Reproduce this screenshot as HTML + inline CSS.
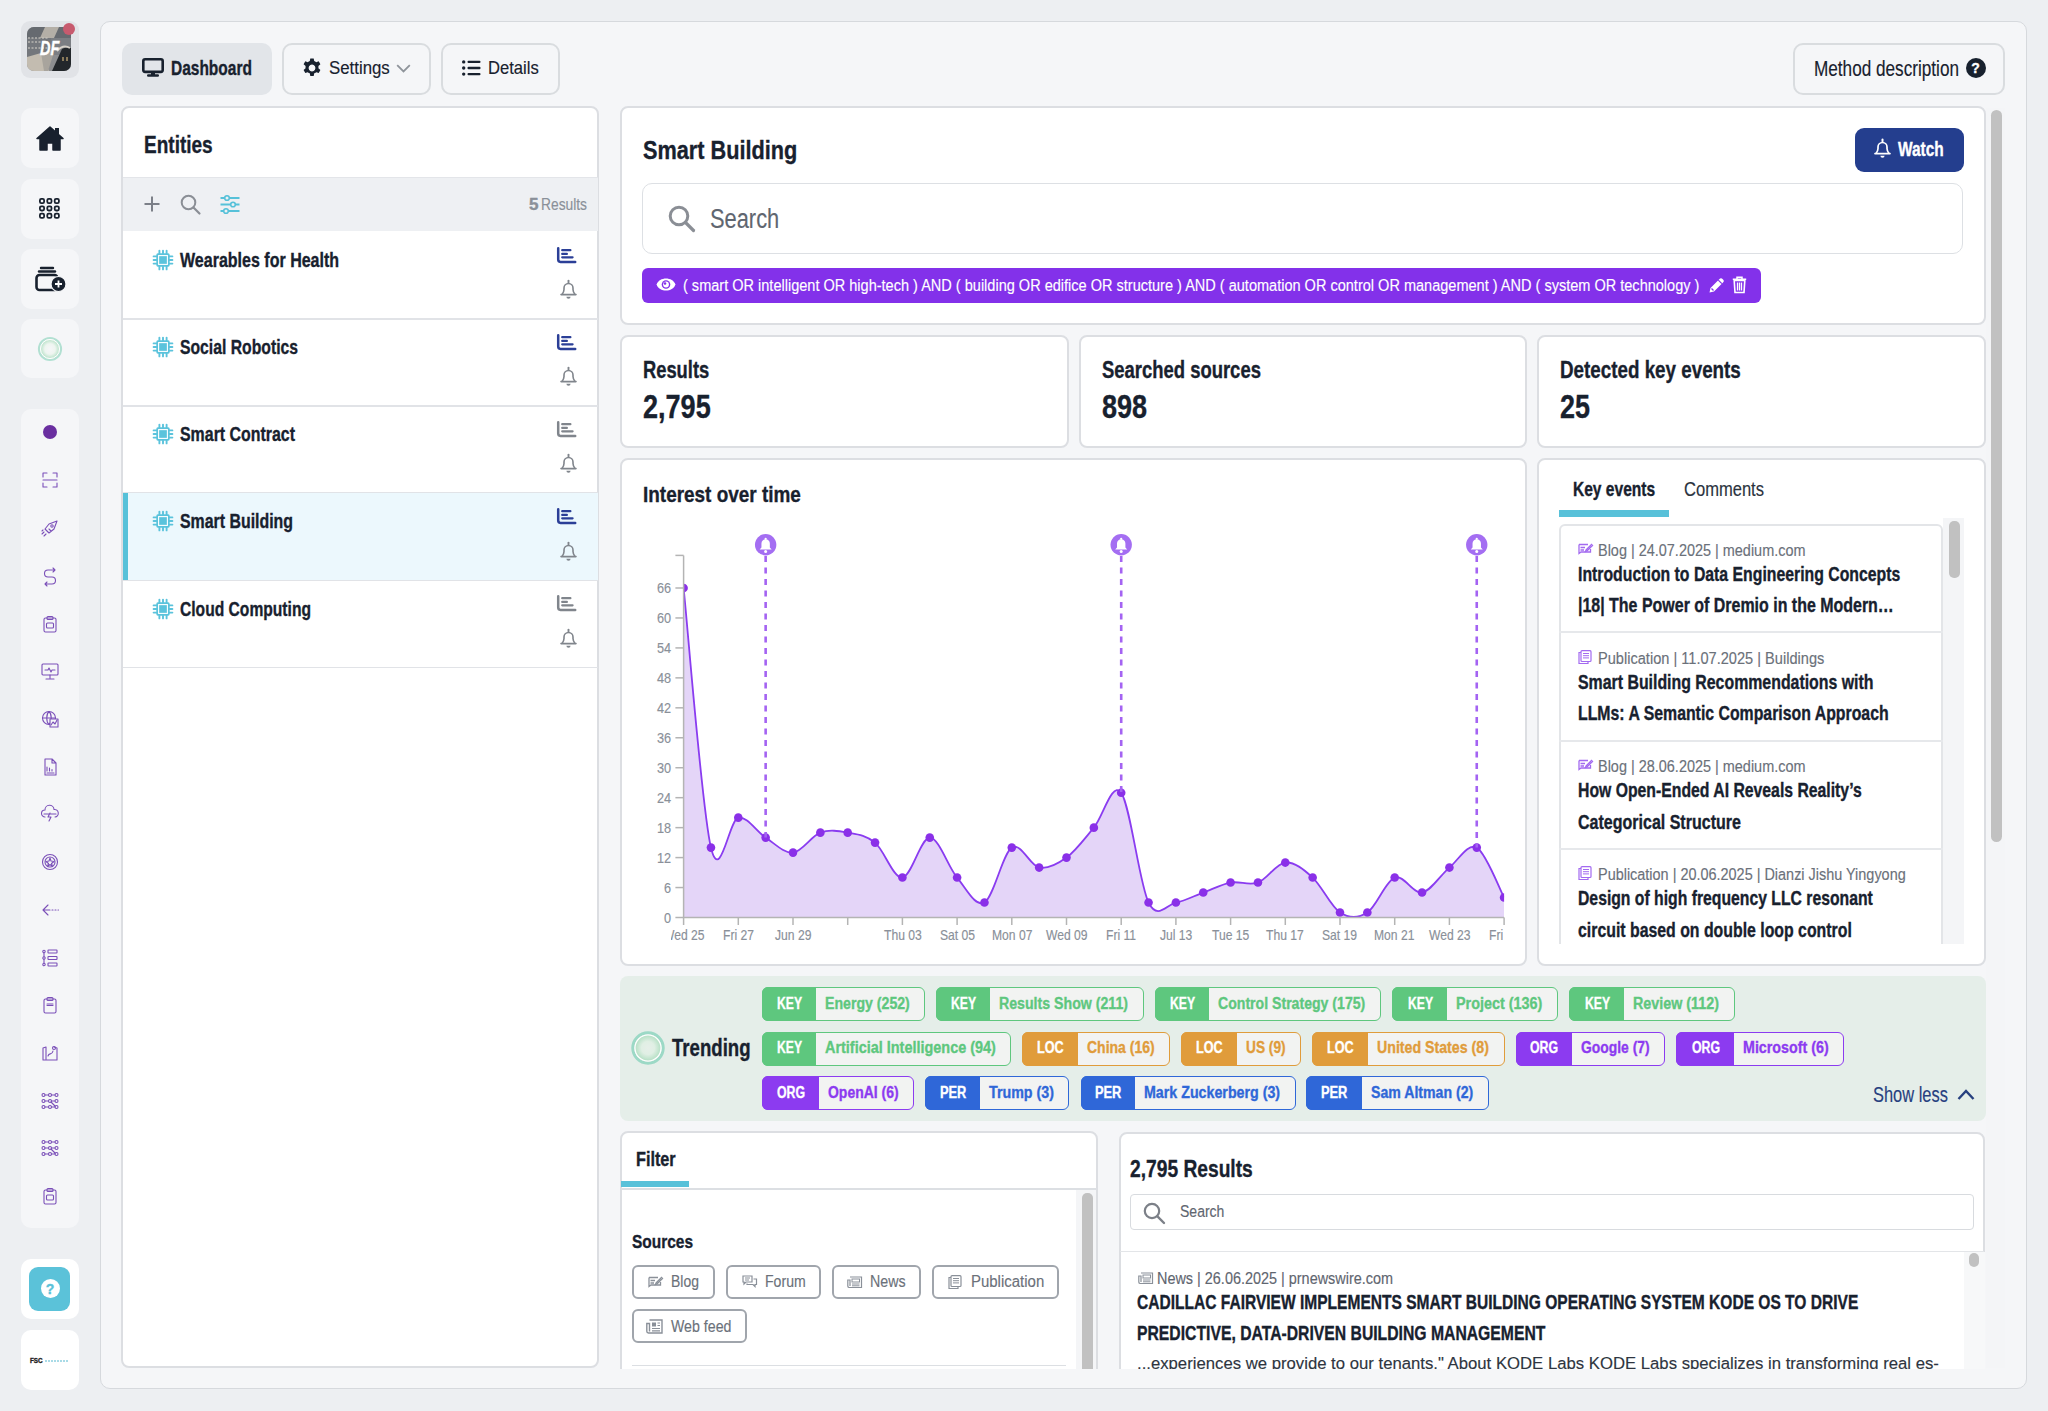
<!DOCTYPE html>
<html><head><meta charset="utf-8"><title>Smart Building Dashboard</title>
<style>
html,body{margin:0;padding:0;}
body{width:2048px;height:1411px;position:relative;overflow:hidden;background:#edeff2;font-family:'Liberation Sans', sans-serif;}
div{box-sizing:border-box;}
.t{position:absolute;white-space:nowrap;line-height:1;transform-origin:0 0;}
svg{overflow:visible;}
</style></head><body>
<div style="position:absolute;left:21px;top:21px;width:58px;height:56.5px;background:#e1e3e7;border-radius:9px;"></div>
<svg style="position:absolute;left:27px;top:27px" width="44" height="44" viewBox="0 0 44 44"><defs><clipPath id="av"><rect width="44" height="44" rx="7"/></clipPath></defs><g clip-path="url(#av)"><rect width="44" height="44" fill="#8d8e90"/><rect width="44" height="11" fill="#666a70"/><path d="M18 0 H32 L27 11 H13 Z" fill="#b4afa7"/><path d="M0 11 H24 V32 H0 Z" fill="#74777c"/><path d="M1 11 H22 M1 15 H22 M1 21 H22" stroke="#c9c6c0" stroke-width="1.4" stroke-dasharray="2,1.5" opacity=".8"/><path d="M0 30 L14 26 L22 44 H0 Z" fill="#c3bcb0"/><path d="M14 26 L28 22 L21 44 H17 Z" fill="#a8a49d"/><path d="M24 11 H44 V28 H24 Z" fill="#7b7e83"/><path d="M25 44 L35 22 Q40 19 44 21 V44 Z" fill="#23272b"/><path d="M30 24 Q36 17 43 21" fill="none" stroke="#d6d1c9" stroke-width="2"/><rect x="35" y="30" width="2" height="4" fill="#8a7a5a"/><rect x="39" y="30" width="2" height="4" fill="#8a7a5a"/></g></svg>
<span class="t" style="left:39.70px;top:37.70px;font-size:20.20px;font-weight:700;color:#ffffff;transform:scaleX(0.7169);-webkit-text-stroke:0.35px #ffffff;font-style:italic;">DF</span>
<div style="position:absolute;left:62.9px;top:23.2px;width:12px;height:12px;background:#c75a6e;border-radius:50%;"></div>
<div style="position:absolute;left:21px;top:108px;width:58px;height:60px;background:#f5f6f8;border-radius:10px;"></div>
<div style="position:absolute;left:21px;top:179px;width:58px;height:60px;background:#f5f6f8;border-radius:10px;"></div>
<div style="position:absolute;left:21px;top:249px;width:58px;height:60px;background:#f5f6f8;border-radius:10px;"></div>
<div style="position:absolute;left:21px;top:319px;width:58px;height:59px;background:#f5f6f8;border-radius:10px;"></div>
<svg style="position:absolute;left:36px;top:126px;" width="28" height="25" viewBox="0 0 28 25"><path d="M14 1 L27 12.5 L24 12.5 L24 24 L17 24 L17 17 L11 17 L11 24 L4 24 L4 12.5 L1 12.5 Z" fill="#18212e" stroke="#18212e" stroke-width="1.5" stroke-linejoin="round"/><rect x="19" y="2" width="4" height="7" fill="#18212e"/></svg>
<svg style="position:absolute;left:39.3px;top:197.8px;" width="22" height="22" viewBox="0 0 22 22"><rect x="0.90" y="0.90" width="4.2" height="4.2" rx="1.4" fill="none" stroke="#18212e" stroke-width="1.8"/><rect x="0.90" y="8.30" width="4.2" height="4.2" rx="1.4" fill="none" stroke="#18212e" stroke-width="1.8"/><rect x="0.90" y="15.70" width="4.2" height="4.2" rx="1.4" fill="none" stroke="#18212e" stroke-width="1.8"/><rect x="8.30" y="0.90" width="4.2" height="4.2" rx="1.4" fill="none" stroke="#18212e" stroke-width="1.8"/><rect x="8.30" y="8.30" width="4.2" height="4.2" rx="1.4" fill="none" stroke="#18212e" stroke-width="1.8"/><rect x="8.30" y="15.70" width="4.2" height="4.2" rx="1.4" fill="none" stroke="#18212e" stroke-width="1.8"/><rect x="15.70" y="0.90" width="4.2" height="4.2" rx="1.4" fill="none" stroke="#18212e" stroke-width="1.8"/><rect x="15.70" y="8.30" width="4.2" height="4.2" rx="1.4" fill="none" stroke="#18212e" stroke-width="1.8"/><rect x="15.70" y="15.70" width="4.2" height="4.2" rx="1.4" fill="none" stroke="#18212e" stroke-width="1.8"/></svg>
<svg style="position:absolute;left:35px;top:266px;" width="32" height="26" viewBox="0 0 32 26"><rect x="1.5" y="9" width="21" height="15" rx="3" fill="none" stroke="#18212e" stroke-width="2.6"/><path d="M4 5.5 H20" stroke="#18212e" stroke-width="2.4" stroke-linecap="round"/><path d="M6 2 H18" stroke="#18212e" stroke-width="2.4" stroke-linecap="round"/><circle cx="23.5" cy="18" r="7.5" fill="#18212e" stroke="#f5f6f8" stroke-width="1.2"/><path d="M23.5 14.5 V21.5 M20 18 H27" stroke="#fff" stroke-width="1.8"/></svg>
<svg style="position:absolute;left:36px;top:334.5px;" width="28" height="28" viewBox="0 0 28 28"><defs><radialGradient id="sg"><stop offset="0" stop-color="#f5f6f8"/><stop offset="0.55" stop-color="#eef5f0"/><stop offset="1" stop-color="#b9e2c9"/></radialGradient></defs><circle cx="14" cy="14" r="11" fill="none" stroke="#a6dccb" stroke-width="2.2" opacity=".85"/><circle cx="14" cy="14" r="9.5" fill="url(#sg)" stroke="#ffffff" stroke-width="1"/></svg>
<div style="position:absolute;left:21px;top:409px;width:58px;height:819px;background:#f5f6f8;border-radius:10px;"></div>
<div style="position:absolute;left:42.8px;top:424.9px;width:14px;height:14px;background:#6a2fa0;border-radius:50%;"></div>
<svg style="position:absolute;left:41px;top:471px;" width="18" height="18" viewBox="0 0 18 18"><path d="M2 6 V2 H6 M12 2 H16 V6 M16 12 V16 H12 M6 16 H2 V12 M2 9 H16" fill="none" stroke="#7a4fb8" stroke-width="1.1" stroke-linecap="round" stroke-linejoin="round"/></svg>
<svg style="position:absolute;left:41px;top:519px;" width="18" height="18" viewBox="0 0 18 18"><path d="M16 2 L8 5 L4 10 L8 14 L13 10 Z M8 10 L10 12 M3 13 L1 15 M5 15 L3 17 M2 11 L1 12" fill="none" stroke="#7a4fb8" stroke-width="1.1" stroke-linecap="round" stroke-linejoin="round"/><circle cx="11" cy="7" r="1.2" fill="none" stroke="#7a4fb8" stroke-width="1.1" stroke-linecap="round" stroke-linejoin="round"/></svg>
<svg style="position:absolute;left:41px;top:567px;" width="18" height="18" viewBox="0 0 18 18"><path d="M14 3 H7 A3.5 3.5 0 0 0 7 10 H11 A3.5 3.5 0 0 1 11 17 H4 M12 1 L14 3 L12 5 M6 15 L4 17 L6 19" fill="none" stroke="#7a4fb8" stroke-width="1.1" stroke-linecap="round" stroke-linejoin="round"/></svg>
<svg style="position:absolute;left:41px;top:615px;" width="18" height="18" viewBox="0 0 18 18"><rect x="3" y="3" width="12" height="14" rx="1.5" fill="none" stroke="#7a4fb8" stroke-width="1.1" stroke-linecap="round" stroke-linejoin="round"/><rect x="6" y="1.5" width="6" height="3" rx="1" fill="none" stroke="#7a4fb8" stroke-width="1.1" stroke-linecap="round" stroke-linejoin="round"/><rect x="5.5" y="8" width="7" height="5" rx="1" fill="none" stroke="#7a4fb8" stroke-width="1.1" stroke-linecap="round" stroke-linejoin="round"/></svg>
<svg style="position:absolute;left:41px;top:662px;" width="18" height="18" viewBox="0 0 18 18"><rect x="1" y="2" width="16" height="11" rx="1" fill="none" stroke="#7a4fb8" stroke-width="1.1" stroke-linecap="round" stroke-linejoin="round"/><path d="M4 8 H7 L8 6 L10 10 L11 8 H14 M9 13 V16 M5 17 H13" fill="none" stroke="#7a4fb8" stroke-width="1.1" stroke-linecap="round" stroke-linejoin="round"/></svg>
<svg style="position:absolute;left:41px;top:710px;" width="18" height="18" viewBox="0 0 18 18"><circle cx="8" cy="8" r="6.5" fill="none" stroke="#7a4fb8" stroke-width="1.1" stroke-linecap="round" stroke-linejoin="round"/><path d="M1.5 8 H14.5 M8 1.5 C5 4 5 12 8 14.5 M8 1.5 C11 4 11 12 8 14.5" fill="none" stroke="#7a4fb8" stroke-width="1.1" stroke-linecap="round" stroke-linejoin="round"/><rect x="9" y="9" width="8" height="8" fill="#f5f6f8" fill="none" stroke="#7a4fb8" stroke-width="1.1" stroke-linecap="round" stroke-linejoin="round"/><path d="M10 15 L12 12 L14 14 L16 10" fill="none" stroke="#7a4fb8" stroke-width="1.1" stroke-linecap="round" stroke-linejoin="round"/></svg>
<svg style="position:absolute;left:41px;top:758px;" width="18" height="18" viewBox="0 0 18 18"><path d="M4 1 H11 L15 5 V17 H4 Z M11 1 V5 H15 M6 9 V13 M8.5 10 V13 M11 11.5 V13 M6 15 H13" fill="none" stroke="#7a4fb8" stroke-width="1.1" stroke-linecap="round" stroke-linejoin="round"/></svg>
<svg style="position:absolute;left:41px;top:806px;" width="18" height="18" viewBox="0 0 18 18"><path d="M4 11 A3.5 3.5 0 0 1 4 4 A4.5 4.5 0 0 1 13 3.5 A3.5 3.5 0 0 1 14 11 M9 7 L7 11 H10 L8 15 M3 8 H15" fill="none" stroke="#7a4fb8" stroke-width="1.1" stroke-linecap="round" stroke-linejoin="round"/></svg>
<svg style="position:absolute;left:41px;top:853px;" width="18" height="18" viewBox="0 0 18 18"><circle cx="9" cy="9" r="7.5" fill="none" stroke="#7a4fb8" stroke-width="1.1" stroke-linecap="round" stroke-linejoin="round"/><circle cx="9" cy="9" r="5" fill="none" stroke="#7a4fb8" stroke-width="1.1" stroke-linecap="round" stroke-linejoin="round"/><path d="M9 5 L10 8 L13 8.5 L10.5 10.5 L11.5 13.5 L9 11.5 L6.5 13.5 L7.5 10.5 L5 8.5 L8 8 Z" fill="none" stroke="#7a4fb8" stroke-width="1.1" stroke-linecap="round" stroke-linejoin="round"/></svg>
<svg style="position:absolute;left:41px;top:901px;" width="18" height="18" viewBox="0 0 18 18"><path d="M7 4 L2 9 L7 14 M2 9 H9" fill="none" stroke="#7a4fb8" stroke-width="1.1" stroke-linecap="round" stroke-linejoin="round" stroke-width="1.8"/><path d="M11 9 H12 M14 9 H15 M17 9 H17.5" fill="none" stroke="#7a4fb8" stroke-width="1.1" stroke-linecap="round" stroke-linejoin="round"/></svg>
<svg style="position:absolute;left:41px;top:949px;" width="18" height="18" viewBox="0 0 18 18"><circle cx="3" cy="2.5" r="1.2" fill="none" stroke="#7a4fb8" stroke-width="1.1" stroke-linecap="round" stroke-linejoin="round"/><circle cx="3" cy="9" r="1.2" fill="none" stroke="#7a4fb8" stroke-width="1.1" stroke-linecap="round" stroke-linejoin="round"/><circle cx="3" cy="15.5" r="1.2" fill="none" stroke="#7a4fb8" stroke-width="1.1" stroke-linecap="round" stroke-linejoin="round"/><path d="M3 3.7 V7.8 M3 10.2 V14.3" fill="none" stroke="#7a4fb8" stroke-width="1.1" stroke-linecap="round" stroke-linejoin="round"/><rect x="7" y="1" width="9" height="3" rx=".5" fill="none" stroke="#7a4fb8" stroke-width="1.1" stroke-linecap="round" stroke-linejoin="round"/><rect x="7" y="7.5" width="9" height="3" rx=".5" fill="none" stroke="#7a4fb8" stroke-width="1.1" stroke-linecap="round" stroke-linejoin="round"/><rect x="7" y="14" width="9" height="3" rx=".5" fill="none" stroke="#7a4fb8" stroke-width="1.1" stroke-linecap="round" stroke-linejoin="round"/></svg>
<svg style="position:absolute;left:41px;top:996px;" width="18" height="18" viewBox="0 0 18 18"><rect x="3" y="3" width="12" height="14" rx="1.5" fill="none" stroke="#7a4fb8" stroke-width="1.1" stroke-linecap="round" stroke-linejoin="round"/><rect x="6" y="1.5" width="6" height="3" rx="1" fill="none" stroke="#7a4fb8" stroke-width="1.1" stroke-linecap="round" stroke-linejoin="round"/><path d="M6 8 H12 M6 9.5 H12" fill="none" stroke="#7a4fb8" stroke-width="1.1" stroke-linecap="round" stroke-linejoin="round"/></svg>
<svg style="position:absolute;left:41px;top:1044px;" width="18" height="18" viewBox="0 0 18 18"><path d="M2 4 V16 H16 V4 M2 4 L5 3 V15 M13 3 L16 4 M7 12 C8 8 11 12 12 7" fill="none" stroke="#7a4fb8" stroke-width="1.1" stroke-linecap="round" stroke-linejoin="round"/><circle cx="13" cy="4" r="1.5" fill="none" stroke="#7a4fb8" stroke-width="1.1" stroke-linecap="round" stroke-linejoin="round"/></svg>
<svg style="position:absolute;left:41px;top:1092px;" width="18" height="18" viewBox="0 0 18 18"><circle cx="2.5" cy="3" r="1.5" fill="none" stroke="#7a4fb8" stroke-width="1.1" stroke-linecap="round" stroke-linejoin="round"/><circle cx="9" cy="3" r="1.5" fill="none" stroke="#7a4fb8" stroke-width="1.1" stroke-linecap="round" stroke-linejoin="round"/><circle cx="15.5" cy="3" r="1.5" fill="none" stroke="#7a4fb8" stroke-width="1.1" stroke-linecap="round" stroke-linejoin="round"/><circle cx="2.5" cy="9" r="1.5" fill="none" stroke="#7a4fb8" stroke-width="1.1" stroke-linecap="round" stroke-linejoin="round"/><circle cx="9" cy="9" r="1.5" fill="none" stroke="#7a4fb8" stroke-width="1.1" stroke-linecap="round" stroke-linejoin="round"/><circle cx="15.5" cy="9" r="1.5" fill="none" stroke="#7a4fb8" stroke-width="1.1" stroke-linecap="round" stroke-linejoin="round"/><circle cx="2.5" cy="15" r="1.5" fill="none" stroke="#7a4fb8" stroke-width="1.1" stroke-linecap="round" stroke-linejoin="round"/><circle cx="9" cy="15" r="1.5" fill="none" stroke="#7a4fb8" stroke-width="1.1" stroke-linecap="round" stroke-linejoin="round"/><circle cx="15.5" cy="15" r="1.5" fill="none" stroke="#7a4fb8" stroke-width="1.1" stroke-linecap="round" stroke-linejoin="round"/><path d="M4 3 H7.5 M10.5 3 H14 M4 9 H7.5 M10.5 9 H14 M4 15 H7.5 M10.5 15 H14 M10 10 L14 14" fill="none" stroke="#7a4fb8" stroke-width="1.1" stroke-linecap="round" stroke-linejoin="round"/></svg>
<svg style="position:absolute;left:41px;top:1139px;" width="18" height="18" viewBox="0 0 18 18"><circle cx="2.5" cy="3" r="1.5" fill="none" stroke="#7a4fb8" stroke-width="1.1" stroke-linecap="round" stroke-linejoin="round"/><circle cx="9" cy="3" r="1.5" fill="none" stroke="#7a4fb8" stroke-width="1.1" stroke-linecap="round" stroke-linejoin="round"/><circle cx="15.5" cy="3" r="1.5" fill="none" stroke="#7a4fb8" stroke-width="1.1" stroke-linecap="round" stroke-linejoin="round"/><circle cx="2.5" cy="9" r="1.5" fill="none" stroke="#7a4fb8" stroke-width="1.1" stroke-linecap="round" stroke-linejoin="round"/><circle cx="9" cy="9" r="1.5" fill="none" stroke="#7a4fb8" stroke-width="1.1" stroke-linecap="round" stroke-linejoin="round"/><circle cx="15.5" cy="9" r="1.5" fill="none" stroke="#7a4fb8" stroke-width="1.1" stroke-linecap="round" stroke-linejoin="round"/><circle cx="2.5" cy="15" r="1.5" fill="none" stroke="#7a4fb8" stroke-width="1.1" stroke-linecap="round" stroke-linejoin="round"/><circle cx="9" cy="15" r="1.5" fill="none" stroke="#7a4fb8" stroke-width="1.1" stroke-linecap="round" stroke-linejoin="round"/><circle cx="15.5" cy="15" r="1.5" fill="none" stroke="#7a4fb8" stroke-width="1.1" stroke-linecap="round" stroke-linejoin="round"/><path d="M4 3 H7.5 M10.5 3 H14 M4 9 H7.5 M10.5 9 H14 M4 15 H7.5 M10.5 15 H14 M10 10 L14 14" fill="none" stroke="#7a4fb8" stroke-width="1.1" stroke-linecap="round" stroke-linejoin="round"/></svg>
<svg style="position:absolute;left:41px;top:1187px;" width="18" height="18" viewBox="0 0 18 18"><rect x="3" y="3" width="12" height="14" rx="1.5" fill="none" stroke="#7a4fb8" stroke-width="1.1" stroke-linecap="round" stroke-linejoin="round"/><rect x="6" y="1.5" width="6" height="3" rx="1" fill="none" stroke="#7a4fb8" stroke-width="1.1" stroke-linecap="round" stroke-linejoin="round"/><rect x="5.5" y="8" width="7" height="5" rx="1" fill="none" stroke="#7a4fb8" stroke-width="1.1" stroke-linecap="round" stroke-linejoin="round"/></svg>
<div style="position:absolute;left:21px;top:1259px;width:58px;height:60px;background:#ffffff;border-radius:10px;"></div>
<div style="position:absolute;left:29px;top:1267px;width:41px;height:44px;background:#5bc2d9;border-radius:9px;"></div>
<div style="position:absolute;left:40.5px;top:1278.8px;width:19px;height:19px;background:#ffffff;border-radius:50%;"></div>
<span class="t" style="left:45.72px;top:1282.30px;font-size:14.00px;font-weight:700;color:#5bc2d9;transform:scaleX(1.0000);-webkit-text-stroke:0.35px #5bc2d9;">?</span>
<div style="position:absolute;left:21px;top:1330px;width:58px;height:60px;background:#ffffff;border-radius:10px;"></div>
<span class="t" style="left:30.00px;top:1357.00px;font-size:7.00px;font-weight:700;color:#222;transform:scaleX(0.9000);-webkit-text-stroke:0.35px #222;">FSC</span>
<div style="position:absolute;left:45px;top:1359.8px;width:24px;height:2px;background:repeating-linear-gradient(90deg,#a9dbe7 0 2px,transparent 2px 3px);"></div>
<div style="position:absolute;left:100px;top:20.5px;width:1926.8px;height:1368.5px;background:#f5f6f8;border:1.5px solid #d6d9dd;border-radius:10px;"></div>
<div style="position:absolute;left:121.6px;top:42.5px;width:150.4px;height:52px;background:#e2e5e9;border-radius:10px;"></div>
<svg style="position:absolute;left:142px;top:58px;" width="22" height="19" viewBox="0 0 22 19"><rect x="1.3" y="1.3" width="19.4" height="12.6" rx="1.8" fill="none" stroke="#18212e" stroke-width="2.6"/><rect x="9" y="14" width="4" height="3" fill="#18212e"/><rect x="5" y="16.2" width="12" height="2.6" rx="1.2" fill="#18212e"/></svg>
<span class="t" style="left:170.60px;top:57.70px;font-size:20.14px;font-weight:700;color:#18212e;transform:scaleX(0.7696);-webkit-text-stroke:0.35px #18212e;">Dashboard</span>
<div style="position:absolute;left:282px;top:42.5px;width:149px;height:52.5px;border:2px solid #d9dcdf;border-radius:10px;"></div>
<svg style="position:absolute;left:302px;top:58px;" width="20" height="20" viewBox="0 0 20 20"><path fill="#18212e" d="M8.3 0.5 h3.4 l0.5 2.6 a7.3 7.3 0 0 1 2 1.15 l2.5 -0.9 l1.7 2.95 l-2 1.75 a7.3 7.3 0 0 1 0 2.3 l2 1.75 l-1.7 2.95 l-2.5 -0.9 a7.3 7.3 0 0 1 -2 1.15 l-0.5 2.6 h-3.4 l-0.5 -2.6 a7.3 7.3 0 0 1 -2 -1.15 l-2.5 0.9 l-1.7 -2.95 l2 -1.75 a7.3 7.3 0 0 1 0 -2.3 l-2 -1.75 l1.7 -2.95 l2.5 0.9 a7.3 7.3 0 0 1 2 -1.15 Z M10 6.6 a3.4 3.4 0 1 0 0.01 0 Z" fill-rule="evenodd"/></svg>
<span class="t" style="left:328.80px;top:58.30px;font-size:19.28px;font-weight:400;color:#18212e;transform:scaleX(0.8732);-webkit-text-stroke:0.15px #18212e;">Settings</span>
<svg style="position:absolute;left:396px;top:63.5px;" width="15" height="9" viewBox="0 0 15 9"><path d="M1.2 1.2 L7.5 7.5 L13.8 1.2" fill="none" stroke="#8f949b" stroke-width="1.8"/></svg>
<div style="position:absolute;left:441.3px;top:42.5px;width:118.5px;height:52.5px;border:2px solid #d9dcdf;border-radius:10px;"></div>
<svg style="position:absolute;left:462px;top:59.5px;" width="19" height="16" viewBox="0 0 19 16"><circle cx="1.7" cy="1.9" r="1.7" fill="#18212e"/><circle cx="1.7" cy="8" r="1.7" fill="#18212e"/><circle cx="1.7" cy="14.1" r="1.7" fill="#18212e"/><rect x="5.5" y="0.7" width="13" height="2.4" rx="1" fill="#18212e"/><rect x="5.5" y="6.8" width="13" height="2.4" rx="1" fill="#18212e"/><rect x="5.5" y="12.9" width="13" height="2.4" rx="1" fill="#18212e"/></svg>
<span class="t" style="left:488.30px;top:58.30px;font-size:19.28px;font-weight:400;color:#18212e;transform:scaleX(0.8609);-webkit-text-stroke:0.15px #18212e;">Details</span>
<div style="position:absolute;left:1793px;top:42.6px;width:212px;height:52.4px;border:2px solid #d9dcdf;border-radius:10px;"></div>
<span class="t" style="left:1813.50px;top:57.50px;font-size:21.16px;font-weight:400;color:#18212e;transform:scaleX(0.8111);-webkit-text-stroke:0.15px #18212e;">Method description</span>
<svg style="position:absolute;left:1965.5px;top:57.5px;" width="20" height="20" viewBox="0 0 20 20"><circle cx="10" cy="10" r="10" fill="#18212e"/></svg>
<span class="t" style="left:1971.22px;top:61.00px;font-size:14.00px;font-weight:700;color:#ffffff;transform:scaleX(1.0000);-webkit-text-stroke:0.35px #ffffff;">?</span>
<div style="position:absolute;left:121.2px;top:105.5px;width:477.8px;height:1262.5px;background:#ffffff;border:2px solid #dcdee2;border-radius:8px;overflow:hidden;"></div>
<span class="t" style="left:144.30px;top:133.00px;font-size:24.35px;font-weight:700;color:#18212e;transform:scaleX(0.7812);-webkit-text-stroke:0.35px #18212e;">Entities</span>
<div style="position:absolute;left:123px;top:176.5px;width:474.5px;height:54.5px;background:#eef0f3;border-top:1px solid #e3e5e9;"></div>
<svg style="position:absolute;left:143.5px;top:196px;" width="16" height="16" viewBox="0 0 16 16"><path d="M8 0.5 V15.5 M0.5 8 H15.5" stroke="#7c8088" stroke-width="2" fill="none"/></svg>
<svg style="position:absolute;left:180px;top:194px;" width="21" height="21" viewBox="0 0 21 21"><circle cx="8.5" cy="8.5" r="6.8" fill="none" stroke="#8a8e95" stroke-width="2"/><path d="M13.5 13.5 L19.5 19.5" stroke="#8a8e95" stroke-width="2.2" stroke-linecap="round"/></svg>
<svg style="position:absolute;left:220px;top:194.5px;" width="20" height="19" viewBox="0 0 20 19"><path d="M0.5 3 H19.5 M0.5 9.5 H19.5 M0.5 16 H19.5" stroke="#56c1d9" stroke-width="2" fill="none"/><circle cx="7" cy="3" r="2.3" fill="#eef0f3" stroke="#56c1d9" stroke-width="1.6"/><circle cx="13" cy="9.5" r="2.3" fill="#eef0f3" stroke="#56c1d9" stroke-width="1.6"/><circle cx="6" cy="16" r="2.3" fill="#eef0f3" stroke="#56c1d9" stroke-width="1.6"/></svg>
<span class="t" style="left:528.90px;top:197.30px;font-size:16.52px;font-weight:700;color:#8a9099;transform:scaleX(1.0340);-webkit-text-stroke:0.35px #8a9099;">5</span>
<span class="t" style="left:541.30px;top:197.30px;font-size:16.52px;font-weight:400;color:#8a9099;transform:scaleX(0.8352);-webkit-text-stroke:0.15px #8a9099;">Results</span>
<div style="position:absolute;left:123px;top:318.0px;width:474.5px;height:1.6px;background:#e1e3e7;"></div>
<svg style="position:absolute;left:152.8px;top:249.7px;" width="20" height="20" viewBox="0 0 20 20"><rect x="3.3" y="3.3" width="13.4" height="13.4" rx="1.6" fill="#5bc3dc"/><rect x="5.6" y="5.6" width="8.8" height="8.8" fill="none" stroke="#ffffff" stroke-width="1.1"/><path d="M6.4 0.6 V3.5 M6.4 16.5 V19.4 M0.6 6.4 H3.5 M16.5 6.4 H19.4" stroke="#5bc3dc" stroke-width="1.9" stroke-linecap="round"/><path d="M10 0.6 V3.5 M10 16.5 V19.4 M0.6 10 H3.5 M16.5 10 H19.4" stroke="#5bc3dc" stroke-width="1.9" stroke-linecap="round"/><path d="M13.6 0.6 V3.5 M13.6 16.5 V19.4 M0.6 13.6 H3.5 M16.5 13.6 H19.4" stroke="#5bc3dc" stroke-width="1.9" stroke-linecap="round"/></svg>
<span class="t" style="left:179.50px;top:249.70px;font-size:20.43px;font-weight:700;color:#18212e;transform:scaleX(0.7846);-webkit-text-stroke:0.35px #18212e;">Wearables for Health</span>
<svg style="position:absolute;left:557.3px;top:246.5px;" width="19" height="17" viewBox="0 0 19 17"><path d="M1.2 1.2 V12.6 Q1.2 14.9 3.5 14.9 H18.2" fill="none" stroke="#2b3f97" stroke-width="2.5" stroke-linecap="round" stroke-linejoin="round"/><path d="M5.2 3.2 H13.4 M5.2 6.9 H9.9 M5.2 10.3 H15.6" stroke="#2b3f97" stroke-width="2.2" stroke-linecap="round"/></svg>
<svg style="position:absolute;left:559.5px;top:280.0px;" width="17" height="19" viewBox="0 0 17 19"><path d="M8.5 0.6 V2.6" stroke="#80858c" stroke-width="1.9000000000000001" stroke-linecap="round"/><path d="M1 14.6 H16 M1.8 14.6 C3.3 13 4 11.5 4 9.5 V8 A4.5 4.5 0 0 1 13 8 V9.5 C13 11.5 13.7 13 15.2 14.6" fill="none" stroke="#80858c" stroke-width="1.6" stroke-linejoin="round" stroke-linecap="round"/><path d="M6.4 16.7 A2.1 2.1 0 0 0 10.6 16.7 Z" fill="#80858c"/></svg>
<div style="position:absolute;left:123px;top:405.2px;width:474.5px;height:1.6px;background:#e1e3e7;"></div>
<svg style="position:absolute;left:152.8px;top:336.9px;" width="20" height="20" viewBox="0 0 20 20"><rect x="3.3" y="3.3" width="13.4" height="13.4" rx="1.6" fill="#5bc3dc"/><rect x="5.6" y="5.6" width="8.8" height="8.8" fill="none" stroke="#ffffff" stroke-width="1.1"/><path d="M6.4 0.6 V3.5 M6.4 16.5 V19.4 M0.6 6.4 H3.5 M16.5 6.4 H19.4" stroke="#5bc3dc" stroke-width="1.9" stroke-linecap="round"/><path d="M10 0.6 V3.5 M10 16.5 V19.4 M0.6 10 H3.5 M16.5 10 H19.4" stroke="#5bc3dc" stroke-width="1.9" stroke-linecap="round"/><path d="M13.6 0.6 V3.5 M13.6 16.5 V19.4 M0.6 13.6 H3.5 M16.5 13.6 H19.4" stroke="#5bc3dc" stroke-width="1.9" stroke-linecap="round"/></svg>
<span class="t" style="left:179.50px;top:336.90px;font-size:20.43px;font-weight:700;color:#18212e;transform:scaleX(0.7709);-webkit-text-stroke:0.35px #18212e;">Social Robotics</span>
<svg style="position:absolute;left:557.3px;top:333.7px;" width="19" height="17" viewBox="0 0 19 17"><path d="M1.2 1.2 V12.6 Q1.2 14.9 3.5 14.9 H18.2" fill="none" stroke="#2b3f97" stroke-width="2.5" stroke-linecap="round" stroke-linejoin="round"/><path d="M5.2 3.2 H13.4 M5.2 6.9 H9.9 M5.2 10.3 H15.6" stroke="#2b3f97" stroke-width="2.2" stroke-linecap="round"/></svg>
<svg style="position:absolute;left:559.5px;top:367.2px;" width="17" height="19" viewBox="0 0 17 19"><path d="M8.5 0.6 V2.6" stroke="#80858c" stroke-width="1.9000000000000001" stroke-linecap="round"/><path d="M1 14.6 H16 M1.8 14.6 C3.3 13 4 11.5 4 9.5 V8 A4.5 4.5 0 0 1 13 8 V9.5 C13 11.5 13.7 13 15.2 14.6" fill="none" stroke="#80858c" stroke-width="1.6" stroke-linejoin="round" stroke-linecap="round"/><path d="M6.4 16.7 A2.1 2.1 0 0 0 10.6 16.7 Z" fill="#80858c"/></svg>
<div style="position:absolute;left:123px;top:492.4px;width:474.5px;height:1.6px;background:#e1e3e7;"></div>
<svg style="position:absolute;left:152.8px;top:424.09999999999997px;" width="20" height="20" viewBox="0 0 20 20"><rect x="3.3" y="3.3" width="13.4" height="13.4" rx="1.6" fill="#5bc3dc"/><rect x="5.6" y="5.6" width="8.8" height="8.8" fill="none" stroke="#ffffff" stroke-width="1.1"/><path d="M6.4 0.6 V3.5 M6.4 16.5 V19.4 M0.6 6.4 H3.5 M16.5 6.4 H19.4" stroke="#5bc3dc" stroke-width="1.9" stroke-linecap="round"/><path d="M10 0.6 V3.5 M10 16.5 V19.4 M0.6 10 H3.5 M16.5 10 H19.4" stroke="#5bc3dc" stroke-width="1.9" stroke-linecap="round"/><path d="M13.6 0.6 V3.5 M13.6 16.5 V19.4 M0.6 13.6 H3.5 M16.5 13.6 H19.4" stroke="#5bc3dc" stroke-width="1.9" stroke-linecap="round"/></svg>
<span class="t" style="left:179.50px;top:424.10px;font-size:20.43px;font-weight:700;color:#18212e;transform:scaleX(0.7795);-webkit-text-stroke:0.35px #18212e;">Smart Contract</span>
<svg style="position:absolute;left:557.3px;top:420.9px;" width="19" height="17" viewBox="0 0 19 17"><path d="M1.2 1.2 V12.6 Q1.2 14.9 3.5 14.9 H18.2" fill="none" stroke="#80858c" stroke-width="2.5" stroke-linecap="round" stroke-linejoin="round"/><path d="M5.2 3.2 H13.4 M5.2 6.9 H9.9 M5.2 10.3 H15.6" stroke="#80858c" stroke-width="2.2" stroke-linecap="round"/></svg>
<svg style="position:absolute;left:559.5px;top:454.4px;" width="17" height="19" viewBox="0 0 17 19"><path d="M8.5 0.6 V2.6" stroke="#80858c" stroke-width="1.9000000000000001" stroke-linecap="round"/><path d="M1 14.6 H16 M1.8 14.6 C3.3 13 4 11.5 4 9.5 V8 A4.5 4.5 0 0 1 13 8 V9.5 C13 11.5 13.7 13 15.2 14.6" fill="none" stroke="#80858c" stroke-width="1.6" stroke-linejoin="round" stroke-linecap="round"/><path d="M6.4 16.7 A2.1 2.1 0 0 0 10.6 16.7 Z" fill="#80858c"/></svg>
<div style="position:absolute;left:123px;top:493.1px;width:474.5px;height:87px;background:#ecf8fd;"></div>
<div style="position:absolute;left:123px;top:493.1px;width:5px;height:87px;background:#56c1d9;"></div>
<div style="position:absolute;left:123px;top:579.6px;width:474.5px;height:1.6px;background:#e1e3e7;"></div>
<svg style="position:absolute;left:152.8px;top:511.3px;" width="20" height="20" viewBox="0 0 20 20"><rect x="3.3" y="3.3" width="13.4" height="13.4" rx="1.6" fill="#5bc3dc"/><rect x="5.6" y="5.6" width="8.8" height="8.8" fill="none" stroke="#ffffff" stroke-width="1.1"/><path d="M6.4 0.6 V3.5 M6.4 16.5 V19.4 M0.6 6.4 H3.5 M16.5 6.4 H19.4" stroke="#5bc3dc" stroke-width="1.9" stroke-linecap="round"/><path d="M10 0.6 V3.5 M10 16.5 V19.4 M0.6 10 H3.5 M16.5 10 H19.4" stroke="#5bc3dc" stroke-width="1.9" stroke-linecap="round"/><path d="M13.6 0.6 V3.5 M13.6 16.5 V19.4 M0.6 13.6 H3.5 M16.5 13.6 H19.4" stroke="#5bc3dc" stroke-width="1.9" stroke-linecap="round"/></svg>
<span class="t" style="left:179.50px;top:511.30px;font-size:20.43px;font-weight:700;color:#18212e;transform:scaleX(0.7781);-webkit-text-stroke:0.35px #18212e;">Smart Building</span>
<svg style="position:absolute;left:557.3px;top:508.1px;" width="19" height="17" viewBox="0 0 19 17"><path d="M1.2 1.2 V12.6 Q1.2 14.9 3.5 14.9 H18.2" fill="none" stroke="#2b3f97" stroke-width="2.5" stroke-linecap="round" stroke-linejoin="round"/><path d="M5.2 3.2 H13.4 M5.2 6.9 H9.9 M5.2 10.3 H15.6" stroke="#2b3f97" stroke-width="2.2" stroke-linecap="round"/></svg>
<svg style="position:absolute;left:559.5px;top:541.6px;" width="17" height="19" viewBox="0 0 17 19"><path d="M8.5 0.6 V2.6" stroke="#80858c" stroke-width="1.9000000000000001" stroke-linecap="round"/><path d="M1 14.6 H16 M1.8 14.6 C3.3 13 4 11.5 4 9.5 V8 A4.5 4.5 0 0 1 13 8 V9.5 C13 11.5 13.7 13 15.2 14.6" fill="none" stroke="#80858c" stroke-width="1.6" stroke-linejoin="round" stroke-linecap="round"/><path d="M6.4 16.7 A2.1 2.1 0 0 0 10.6 16.7 Z" fill="#80858c"/></svg>
<div style="position:absolute;left:123px;top:666.8px;width:474.5px;height:1.6px;background:#e1e3e7;"></div>
<svg style="position:absolute;left:152.8px;top:598.5px;" width="20" height="20" viewBox="0 0 20 20"><rect x="3.3" y="3.3" width="13.4" height="13.4" rx="1.6" fill="#5bc3dc"/><rect x="5.6" y="5.6" width="8.8" height="8.8" fill="none" stroke="#ffffff" stroke-width="1.1"/><path d="M6.4 0.6 V3.5 M6.4 16.5 V19.4 M0.6 6.4 H3.5 M16.5 6.4 H19.4" stroke="#5bc3dc" stroke-width="1.9" stroke-linecap="round"/><path d="M10 0.6 V3.5 M10 16.5 V19.4 M0.6 10 H3.5 M16.5 10 H19.4" stroke="#5bc3dc" stroke-width="1.9" stroke-linecap="round"/><path d="M13.6 0.6 V3.5 M13.6 16.5 V19.4 M0.6 13.6 H3.5 M16.5 13.6 H19.4" stroke="#5bc3dc" stroke-width="1.9" stroke-linecap="round"/></svg>
<span class="t" style="left:179.50px;top:598.50px;font-size:20.43px;font-weight:700;color:#18212e;transform:scaleX(0.7648);-webkit-text-stroke:0.35px #18212e;">Cloud Computing</span>
<svg style="position:absolute;left:557.3px;top:595.3px;" width="19" height="17" viewBox="0 0 19 17"><path d="M1.2 1.2 V12.6 Q1.2 14.9 3.5 14.9 H18.2" fill="none" stroke="#80858c" stroke-width="2.5" stroke-linecap="round" stroke-linejoin="round"/><path d="M5.2 3.2 H13.4 M5.2 6.9 H9.9 M5.2 10.3 H15.6" stroke="#80858c" stroke-width="2.2" stroke-linecap="round"/></svg>
<svg style="position:absolute;left:559.5px;top:628.8px;" width="17" height="19" viewBox="0 0 17 19"><path d="M8.5 0.6 V2.6" stroke="#80858c" stroke-width="1.9000000000000001" stroke-linecap="round"/><path d="M1 14.6 H16 M1.8 14.6 C3.3 13 4 11.5 4 9.5 V8 A4.5 4.5 0 0 1 13 8 V9.5 C13 11.5 13.7 13 15.2 14.6" fill="none" stroke="#80858c" stroke-width="1.6" stroke-linejoin="round" stroke-linecap="round"/><path d="M6.4 16.7 A2.1 2.1 0 0 0 10.6 16.7 Z" fill="#80858c"/></svg>
<div style="position:absolute;left:620px;top:105.5px;width:1365.5px;height:219px;background:#ffffff;border:2px solid #dcdee2;border-radius:8px;"></div>
<span class="t" style="left:642.70px;top:137.30px;font-size:26.67px;font-weight:700;color:#18212e;transform:scaleX(0.8140);-webkit-text-stroke:0.35px #18212e;">Smart Building</span>
<div style="position:absolute;left:1855.2px;top:127.6px;width:108.4px;height:44.4px;background:#243e8e;border-radius:9px;"></div>
<svg style="position:absolute;left:1873.5px;top:139.3px;" width="17" height="19" viewBox="0 0 17 19"><path d="M8.5 0.6 V2.6" stroke="#ffffff" stroke-width="2.0" stroke-linecap="round"/><path d="M1 14.6 H16 M1.8 14.6 C3.3 13 4 11.5 4 9.5 V8 A4.5 4.5 0 0 1 13 8 V9.5 C13 11.5 13.7 13 15.2 14.6" fill="none" stroke="#ffffff" stroke-width="1.7" stroke-linejoin="round" stroke-linecap="round"/><path d="M6.4 16.7 A2.1 2.1 0 0 0 10.6 16.7 Z" fill="#ffffff"/></svg>
<span class="t" style="left:1898.00px;top:140.30px;font-size:19.57px;font-weight:700;color:#ffffff;transform:scaleX(0.7901);-webkit-text-stroke:0.35px #ffffff;">Watch</span>
<div style="position:absolute;left:642px;top:183px;width:1321px;height:71px;border:1.5px solid #dde0e4;border-radius:10px;"></div>
<svg style="position:absolute;left:668px;top:205px;" width="28" height="28" viewBox="0 0 28 28"><circle cx="11" cy="11" r="8.8" fill="none" stroke="#8a8e95" stroke-width="3"/><path d="M17.5 17.5 L25.5 25.5" stroke="#8a8e95" stroke-width="3.2" stroke-linecap="round"/></svg>
<span class="t" style="left:710.00px;top:204.90px;font-size:27.39px;font-weight:400;color:#5f6670;transform:scaleX(0.7977);-webkit-text-stroke:0.15px #5f6670;">Search</span>
<div style="position:absolute;left:642px;top:268.3px;width:1119.3px;height:34.6px;background:#8331ea;border-radius:6px;"></div>
<svg style="position:absolute;left:656px;top:277px;" width="20" height="15" viewBox="0 0 20 15"><path d="M0.6 7.5 C3.2 -0.5 16.8 -0.5 19.4 7.5 C16.8 15.5 3.2 15.5 0.6 7.5 Z" fill="#ffffff"/><circle cx="10" cy="7.5" r="4.3" fill="#8331ea"/><circle cx="10" cy="7.5" r="2.9" fill="#ffffff"/><circle cx="9" cy="6.5" r="1.3" fill="#8331ea"/></svg>
<span class="t" style="left:683.20px;top:276.80px;font-size:17.10px;font-weight:400;color:#ffffff;transform:scaleX(0.8498);-webkit-text-stroke:0.15px #ffffff;">( smart OR intelligent OR high-tech ) AND ( building OR edifice OR structure ) AND ( automation OR control OR management ) AND ( system OR technology )</span>
<svg style="position:absolute;left:1708px;top:276.5px;" width="17" height="17" viewBox="0 0 17 17"><path d="M1.5 15.5 L2.5 11 L11.5 2 A1.8 1.8 0 0 1 14.5 2 L15 2.5 A1.8 1.8 0 0 1 15 5.5 L6 14.5 Z" fill="#ffffff"/><path d="M3.5 11.5 L5.5 13.5" stroke="#8331ea" stroke-width="1.2"/><path d="M10.3 3.2 L13.8 6.7" stroke="#8331ea" stroke-width="1.2"/></svg>
<svg style="position:absolute;left:1731.5px;top:276px;" width="15" height="17.5" viewBox="0 0 15 17.5"><path d="M0.8 3.2 H14.2 M5 3 V1.2 H10 V3" fill="none" stroke="#fff" stroke-width="1.5"/><path d="M2.2 4.5 L3 16.5 H12 L12.8 4.5 Z" fill="none" stroke="#fff" stroke-width="1.6"/><path d="M5.5 6.5 V14.5 M7.5 6.5 V14.5 M9.5 6.5 V14.5" stroke="#fff" stroke-width="1.3"/></svg>
<div style="position:absolute;left:620px;top:335px;width:448.5px;height:112.5px;background:#ffffff;border:2px solid #dcdee2;border-radius:8px;"></div>
<span class="t" style="left:642.50px;top:358.00px;font-size:23.77px;font-weight:700;color:#18212e;transform:scaleX(0.7710);-webkit-text-stroke:0.35px #18212e;">Results</span>
<span class="t" style="left:642.50px;top:390.90px;font-size:32.32px;font-weight:700;color:#18212e;transform:scaleX(0.8371);-webkit-text-stroke:0.35px #18212e;">2,795</span>
<div style="position:absolute;left:1079.3px;top:335px;width:447.9000000000001px;height:112.5px;background:#ffffff;border:2px solid #dcdee2;border-radius:8px;"></div>
<span class="t" style="left:1101.80px;top:358.00px;font-size:23.77px;font-weight:700;color:#18212e;transform:scaleX(0.7760);-webkit-text-stroke:0.35px #18212e;">Searched sources</span>
<span class="t" style="left:1101.80px;top:390.90px;font-size:32.32px;font-weight:700;color:#18212e;transform:scaleX(0.8364);-webkit-text-stroke:0.35px #18212e;">898</span>
<div style="position:absolute;left:1537.4px;top:335px;width:448.1999999999998px;height:112.5px;background:#ffffff;border:2px solid #dcdee2;border-radius:8px;"></div>
<span class="t" style="left:1559.90px;top:358.00px;font-size:23.77px;font-weight:700;color:#18212e;transform:scaleX(0.7911);-webkit-text-stroke:0.35px #18212e;">Detected key events</span>
<span class="t" style="left:1559.90px;top:390.90px;font-size:32.32px;font-weight:700;color:#18212e;transform:scaleX(0.8344);-webkit-text-stroke:0.35px #18212e;">25</span>
<div style="position:absolute;left:620px;top:458px;width:906.5px;height:508px;background:#ffffff;border:2px solid #dcdee2;border-radius:8px;"></div>
<span class="t" style="left:643.20px;top:484.20px;font-size:22.32px;font-weight:700;color:#18212e;transform:scaleX(0.8489);-webkit-text-stroke:0.35px #18212e;">Interest over time</span>
<div style="position:absolute;left:621px;top:520px;width:890px;height:440px;overflow:hidden;"><svg style="position:absolute;left:-621px;top:-520px" width="2048" height="1411"><defs><clipPath id="cc"><rect x="683.6" y="540" width="820.50" height="390"/></clipPath></defs><g clip-path="url(#cc)"><path d="M683.60,588.00 C688.16,631.27 701.83,809.33 710.95,847.61 C720.07,885.88 729.18,819.32 738.30,817.65 C747.42,815.99 756.53,831.80 765.65,837.62 C774.77,843.45 783.88,853.43 793.00,852.60 C802.12,851.77 811.23,835.96 820.35,832.63 C829.47,829.30 838.58,830.96 847.70,832.63 C856.82,834.29 865.93,835.12 875.05,842.61 C884.17,850.10 893.28,878.39 902.40,877.56 C911.52,876.73 920.63,837.62 929.75,837.62 C938.87,837.62 947.98,866.74 957.10,877.56 C966.22,888.38 975.33,907.52 984.45,902.52 C993.57,897.53 1002.68,853.43 1011.80,847.61 C1020.92,841.78 1030.03,865.91 1039.15,867.58 C1048.27,869.24 1057.38,864.25 1066.50,857.59 C1075.62,850.93 1084.73,838.45 1093.85,827.64 C1102.97,816.82 1112.08,780.21 1121.20,792.69 C1130.32,805.17 1139.43,884.22 1148.55,902.52 C1157.67,920.83 1166.78,904.19 1175.90,902.52 C1185.02,900.86 1194.13,895.87 1203.25,892.54 C1212.37,889.21 1221.48,884.22 1230.60,882.55 C1239.72,880.89 1248.83,885.88 1257.95,882.55 C1267.07,879.22 1276.18,863.42 1285.30,862.58 C1294.42,861.75 1303.53,869.24 1312.65,877.56 C1321.77,885.88 1330.88,906.68 1340.00,912.51 C1349.12,918.33 1358.23,918.33 1367.35,912.51 C1376.47,906.68 1385.58,880.89 1394.70,877.56 C1403.82,874.23 1412.93,894.20 1422.05,892.54 C1431.17,890.87 1440.28,875.06 1449.40,867.58 C1458.52,860.09 1467.63,842.61 1476.75,847.61 C1485.87,852.60 1499.54,889.21 1504.10,897.53 L1504.10,917.5 L683.60,917.5 Z" fill="#e4d5f8"/><path d="M683.60,588.00 C688.16,631.27 701.83,809.33 710.95,847.61 C720.07,885.88 729.18,819.32 738.30,817.65 C747.42,815.99 756.53,831.80 765.65,837.62 C774.77,843.45 783.88,853.43 793.00,852.60 C802.12,851.77 811.23,835.96 820.35,832.63 C829.47,829.30 838.58,830.96 847.70,832.63 C856.82,834.29 865.93,835.12 875.05,842.61 C884.17,850.10 893.28,878.39 902.40,877.56 C911.52,876.73 920.63,837.62 929.75,837.62 C938.87,837.62 947.98,866.74 957.10,877.56 C966.22,888.38 975.33,907.52 984.45,902.52 C993.57,897.53 1002.68,853.43 1011.80,847.61 C1020.92,841.78 1030.03,865.91 1039.15,867.58 C1048.27,869.24 1057.38,864.25 1066.50,857.59 C1075.62,850.93 1084.73,838.45 1093.85,827.64 C1102.97,816.82 1112.08,780.21 1121.20,792.69 C1130.32,805.17 1139.43,884.22 1148.55,902.52 C1157.67,920.83 1166.78,904.19 1175.90,902.52 C1185.02,900.86 1194.13,895.87 1203.25,892.54 C1212.37,889.21 1221.48,884.22 1230.60,882.55 C1239.72,880.89 1248.83,885.88 1257.95,882.55 C1267.07,879.22 1276.18,863.42 1285.30,862.58 C1294.42,861.75 1303.53,869.24 1312.65,877.56 C1321.77,885.88 1330.88,906.68 1340.00,912.51 C1349.12,918.33 1358.23,918.33 1367.35,912.51 C1376.47,906.68 1385.58,880.89 1394.70,877.56 C1403.82,874.23 1412.93,894.20 1422.05,892.54 C1431.17,890.87 1440.28,875.06 1449.40,867.58 C1458.52,860.09 1467.63,842.61 1476.75,847.61 C1485.87,852.60 1499.54,889.21 1504.10,897.53" fill="none" stroke="#8a3cf0" stroke-width="1.8"/><circle cx="683.60" cy="588.00" r="4.3" fill="#8a30e8"/><circle cx="710.95" cy="847.61" r="4.3" fill="#8a30e8"/><circle cx="738.30" cy="817.65" r="4.3" fill="#8a30e8"/><circle cx="765.65" cy="837.62" r="4.3" fill="#8a30e8"/><circle cx="793.00" cy="852.60" r="4.3" fill="#8a30e8"/><circle cx="820.35" cy="832.63" r="4.3" fill="#8a30e8"/><circle cx="847.70" cy="832.63" r="4.3" fill="#8a30e8"/><circle cx="875.05" cy="842.61" r="4.3" fill="#8a30e8"/><circle cx="902.40" cy="877.56" r="4.3" fill="#8a30e8"/><circle cx="929.75" cy="837.62" r="4.3" fill="#8a30e8"/><circle cx="957.10" cy="877.56" r="4.3" fill="#8a30e8"/><circle cx="984.45" cy="902.52" r="4.3" fill="#8a30e8"/><circle cx="1011.80" cy="847.61" r="4.3" fill="#8a30e8"/><circle cx="1039.15" cy="867.58" r="4.3" fill="#8a30e8"/><circle cx="1066.50" cy="857.59" r="4.3" fill="#8a30e8"/><circle cx="1093.85" cy="827.64" r="4.3" fill="#8a30e8"/><circle cx="1121.20" cy="792.69" r="4.3" fill="#8a30e8"/><circle cx="1148.55" cy="902.52" r="4.3" fill="#8a30e8"/><circle cx="1175.90" cy="902.52" r="4.3" fill="#8a30e8"/><circle cx="1203.25" cy="892.54" r="4.3" fill="#8a30e8"/><circle cx="1230.60" cy="882.55" r="4.3" fill="#8a30e8"/><circle cx="1257.95" cy="882.55" r="4.3" fill="#8a30e8"/><circle cx="1285.30" cy="862.58" r="4.3" fill="#8a30e8"/><circle cx="1312.65" cy="877.56" r="4.3" fill="#8a30e8"/><circle cx="1340.00" cy="912.51" r="4.3" fill="#8a30e8"/><circle cx="1367.35" cy="912.51" r="4.3" fill="#8a30e8"/><circle cx="1394.70" cy="877.56" r="4.3" fill="#8a30e8"/><circle cx="1422.05" cy="892.54" r="4.3" fill="#8a30e8"/><circle cx="1449.40" cy="867.58" r="4.3" fill="#8a30e8"/><circle cx="1476.75" cy="847.61" r="4.3" fill="#8a30e8"/><circle cx="1504.10" cy="897.53" r="4.3" fill="#8a30e8"/></g><path d="M683.6,555.4 V917.5 H1504.1" fill="none" stroke="#b4b4b4" stroke-width="1.5"/><path d="M675.4,555.4 H683.6" stroke="#b4b4b4" stroke-width="1.5"/><path d="M675.4,917.50 H683.6" stroke="#b4b4b4" stroke-width="1.5"/><path d="M675.4,887.55 H683.6" stroke="#b4b4b4" stroke-width="1.5"/><path d="M675.4,857.59 H683.6" stroke="#b4b4b4" stroke-width="1.5"/><path d="M675.4,827.64 H683.6" stroke="#b4b4b4" stroke-width="1.5"/><path d="M675.4,797.68 H683.6" stroke="#b4b4b4" stroke-width="1.5"/><path d="M675.4,767.73 H683.6" stroke="#b4b4b4" stroke-width="1.5"/><path d="M675.4,737.77 H683.6" stroke="#b4b4b4" stroke-width="1.5"/><path d="M675.4,707.82 H683.6" stroke="#b4b4b4" stroke-width="1.5"/><path d="M675.4,677.86 H683.6" stroke="#b4b4b4" stroke-width="1.5"/><path d="M675.4,647.91 H683.6" stroke="#b4b4b4" stroke-width="1.5"/><path d="M675.4,617.95 H683.6" stroke="#b4b4b4" stroke-width="1.5"/><path d="M675.4,588.00 H683.6" stroke="#b4b4b4" stroke-width="1.5"/><path d="M683.60,917.5 V925" stroke="#b4b4b4" stroke-width="1.5"/><path d="M738.30,917.5 V925" stroke="#b4b4b4" stroke-width="1.5"/><path d="M793.00,917.5 V925" stroke="#b4b4b4" stroke-width="1.5"/><path d="M847.70,917.5 V925" stroke="#b4b4b4" stroke-width="1.5"/><path d="M902.40,917.5 V925" stroke="#b4b4b4" stroke-width="1.5"/><path d="M957.10,917.5 V925" stroke="#b4b4b4" stroke-width="1.5"/><path d="M1011.80,917.5 V925" stroke="#b4b4b4" stroke-width="1.5"/><path d="M1066.50,917.5 V925" stroke="#b4b4b4" stroke-width="1.5"/><path d="M1121.20,917.5 V925" stroke="#b4b4b4" stroke-width="1.5"/><path d="M1175.90,917.5 V925" stroke="#b4b4b4" stroke-width="1.5"/><path d="M1230.60,917.5 V925" stroke="#b4b4b4" stroke-width="1.5"/><path d="M1285.30,917.5 V925" stroke="#b4b4b4" stroke-width="1.5"/><path d="M1340.00,917.5 V925" stroke="#b4b4b4" stroke-width="1.5"/><path d="M1394.70,917.5 V925" stroke="#b4b4b4" stroke-width="1.5"/><path d="M1449.40,917.5 V925" stroke="#b4b4b4" stroke-width="1.5"/><path d="M1504.10,917.5 V925" stroke="#b4b4b4" stroke-width="1.5"/><path d="M765.65,556 V837.62" stroke="#a463f2" stroke-width="2.6" stroke-dasharray="6,5.5"/><circle cx="765.65" cy="544.7" r="10.7" fill="#a46ef2"/><path d="M759.65,549.5 L761.45,547.5 V543.5 A4.2 4.2 0 0 1 769.85,543.5 V547.5 L771.65,549.5 Z" fill="#fff"/><circle cx="765.65" cy="551.5" r="1.5" fill="#fff"/><circle cx="765.65" cy="538.8" r="1.1" fill="#fff"/><path d="M1121.20,556 V792.69" stroke="#a463f2" stroke-width="2.6" stroke-dasharray="6,5.5"/><circle cx="1121.20" cy="544.7" r="10.7" fill="#a46ef2"/><path d="M1115.20,549.5 L1117.00,547.5 V543.5 A4.2 4.2 0 0 1 1125.40,543.5 V547.5 L1127.20,549.5 Z" fill="#fff"/><circle cx="1121.20" cy="551.5" r="1.5" fill="#fff"/><circle cx="1121.20" cy="538.8" r="1.1" fill="#fff"/><path d="M1476.75,556 V847.61" stroke="#a463f2" stroke-width="2.6" stroke-dasharray="6,5.5"/><circle cx="1476.75" cy="544.7" r="10.7" fill="#a46ef2"/><path d="M1470.75,549.5 L1472.55,547.5 V543.5 A4.2 4.2 0 0 1 1480.95,543.5 V547.5 L1482.75,549.5 Z" fill="#fff"/><circle cx="1476.75" cy="551.5" r="1.5" fill="#fff"/><circle cx="1476.75" cy="538.8" r="1.1" fill="#fff"/></svg></div>
<span class="t" style="left:663.92px;top:910.60px;font-size:14.80px;font-weight:400;color:#8a9099;transform:scaleX(0.8600);-webkit-text-stroke:0.15px #8a9099;">0</span>
<span class="t" style="left:663.92px;top:880.65px;font-size:14.80px;font-weight:400;color:#8a9099;transform:scaleX(0.8600);-webkit-text-stroke:0.15px #8a9099;">6</span>
<span class="t" style="left:656.84px;top:850.69px;font-size:14.80px;font-weight:400;color:#8a9099;transform:scaleX(0.8600);-webkit-text-stroke:0.15px #8a9099;">12</span>
<span class="t" style="left:656.84px;top:820.74px;font-size:14.80px;font-weight:400;color:#8a9099;transform:scaleX(0.8600);-webkit-text-stroke:0.15px #8a9099;">18</span>
<span class="t" style="left:656.84px;top:790.78px;font-size:14.80px;font-weight:400;color:#8a9099;transform:scaleX(0.8600);-webkit-text-stroke:0.15px #8a9099;">24</span>
<span class="t" style="left:656.84px;top:760.83px;font-size:14.80px;font-weight:400;color:#8a9099;transform:scaleX(0.8600);-webkit-text-stroke:0.15px #8a9099;">30</span>
<span class="t" style="left:656.84px;top:730.87px;font-size:14.80px;font-weight:400;color:#8a9099;transform:scaleX(0.8600);-webkit-text-stroke:0.15px #8a9099;">36</span>
<span class="t" style="left:656.84px;top:700.92px;font-size:14.80px;font-weight:400;color:#8a9099;transform:scaleX(0.8600);-webkit-text-stroke:0.15px #8a9099;">42</span>
<span class="t" style="left:656.84px;top:670.96px;font-size:14.80px;font-weight:400;color:#8a9099;transform:scaleX(0.8600);-webkit-text-stroke:0.15px #8a9099;">48</span>
<span class="t" style="left:656.84px;top:641.01px;font-size:14.80px;font-weight:400;color:#8a9099;transform:scaleX(0.8600);-webkit-text-stroke:0.15px #8a9099;">54</span>
<span class="t" style="left:656.84px;top:611.05px;font-size:14.80px;font-weight:400;color:#8a9099;transform:scaleX(0.8600);-webkit-text-stroke:0.15px #8a9099;">60</span>
<span class="t" style="left:656.84px;top:581.10px;font-size:14.80px;font-weight:400;color:#8a9099;transform:scaleX(0.8600);-webkit-text-stroke:0.15px #8a9099;">66</span>
<div style="position:absolute;left:671px;top:920px;width:832px;height:30px;overflow:hidden;">
<span class="t" style="left:-8.18px;top:7.50px;font-size:14.10px;font-weight:400;color:#8a9099;transform:scaleX(0.8600);-webkit-text-stroke:0.15px #8a9099;">Wed 25</span>
<span class="t" style="left:51.81px;top:7.50px;font-size:14.10px;font-weight:400;color:#8a9099;transform:scaleX(0.8600);-webkit-text-stroke:0.15px #8a9099;">Fri 27</span>
<span class="t" style="left:103.80px;top:7.50px;font-size:14.10px;font-weight:400;color:#8a9099;transform:scaleX(0.8600);-webkit-text-stroke:0.15px #8a9099;">Jun 29</span>
<span class="t" style="left:212.53px;top:7.50px;font-size:14.10px;font-weight:400;color:#8a9099;transform:scaleX(0.8600);-webkit-text-stroke:0.15px #8a9099;">Thu 03</span>
<span class="t" style="left:268.58px;top:7.50px;font-size:14.10px;font-weight:400;color:#8a9099;transform:scaleX(0.8600);-webkit-text-stroke:0.15px #8a9099;">Sat 05</span>
<span class="t" style="left:320.58px;top:7.50px;font-size:14.10px;font-weight:400;color:#8a9099;transform:scaleX(0.8600);-webkit-text-stroke:0.15px #8a9099;">Mon 07</span>
<span class="t" style="left:374.72px;top:7.50px;font-size:14.10px;font-weight:400;color:#8a9099;transform:scaleX(0.8600);-webkit-text-stroke:0.15px #8a9099;">Wed 09</span>
<span class="t" style="left:435.16px;top:7.50px;font-size:14.10px;font-weight:400;color:#8a9099;transform:scaleX(0.8600);-webkit-text-stroke:0.15px #8a9099;">Fri 11</span>
<span class="t" style="left:488.73px;top:7.50px;font-size:14.10px;font-weight:400;color:#8a9099;transform:scaleX(0.8600);-webkit-text-stroke:0.15px #8a9099;">Jul 13</span>
<span class="t" style="left:540.96px;top:7.50px;font-size:14.10px;font-weight:400;color:#8a9099;transform:scaleX(0.8600);-webkit-text-stroke:0.15px #8a9099;">Tue 15</span>
<span class="t" style="left:595.43px;top:7.50px;font-size:14.10px;font-weight:400;color:#8a9099;transform:scaleX(0.8600);-webkit-text-stroke:0.15px #8a9099;">Thu 17</span>
<span class="t" style="left:651.48px;top:7.50px;font-size:14.10px;font-weight:400;color:#8a9099;transform:scaleX(0.8600);-webkit-text-stroke:0.15px #8a9099;">Sat 19</span>
<span class="t" style="left:703.48px;top:7.50px;font-size:14.10px;font-weight:400;color:#8a9099;transform:scaleX(0.8600);-webkit-text-stroke:0.15px #8a9099;">Mon 21</span>
<span class="t" style="left:757.62px;top:7.50px;font-size:14.10px;font-weight:400;color:#8a9099;transform:scaleX(0.8600);-webkit-text-stroke:0.15px #8a9099;">Wed 23</span>
<span class="t" style="left:817.61px;top:7.50px;font-size:14.10px;font-weight:400;color:#8a9099;transform:scaleX(0.8600);-webkit-text-stroke:0.15px #8a9099;">Fri 25</span>
</div>
<div style="position:absolute;left:1537px;top:458px;width:448.5px;height:508px;background:#ffffff;border:2px solid #dcdee2;border-radius:8px;"></div>
<span class="t" style="left:1572.90px;top:479.90px;font-size:19.71px;font-weight:700;color:#18212e;transform:scaleX(0.7897);-webkit-text-stroke:0.35px #18212e;">Key events</span>
<span class="t" style="left:1683.60px;top:479.90px;font-size:19.71px;font-weight:400;color:#2a323d;transform:scaleX(0.8404);-webkit-text-stroke:0.15px #2a323d;">Comments</span>
<div style="position:absolute;left:1559px;top:510.3px;width:110.3px;height:6.8px;background:#58c1d9;"></div>
<div style="position:absolute;left:1942.5px;top:517.5px;width:21.5px;height:426.5px;background:#f4f5f7;"></div>
<div style="position:absolute;left:1949.2px;top:521px;width:10.4px;height:57px;background:#c1c1c1;border-radius:5px;"></div>
<div style="position:absolute;left:1559px;top:523.5px;width:383.5px;height:420.5px;overflow:hidden;">
<div style="position:absolute;left:0px;top:0px;width:383.5px;height:460px;border:2px solid #e3e5e8;border-radius:6px;box-sizing:border-box;"></div>
<svg style="position:absolute;left:18.5px;top:18.0px;" width="15" height="14" viewBox="0 0 15 14"><path d="M1 2.5 H10 M2.5 5.5 H7 M2.5 8 H6 M1 2.5 V11.5 L3 10 H12.5 V7" fill="none" stroke="#a36af0" stroke-width="1.3"/><path d="M8 8 L13.5 2.5 L14.5 3.5 L9 9 L7.5 9.5 Z" fill="none" stroke="#a36af0" stroke-width="1.3"/></svg>
<span class="t" style="left:38.50px;top:19.00px;font-size:16.67px;font-weight:400;color:#6b717a;transform:scaleX(0.8675);-webkit-text-stroke:0.15px #6b717a;">Blog | 24.07.2025 | medium.com</span>
<span class="t" style="left:18.50px;top:41.00px;font-size:19.71px;font-weight:700;color:#18212e;transform:scaleX(0.8029);-webkit-text-stroke:0.35px #18212e;">Introduction to Data Engineering Concepts</span>
<span class="t" style="left:18.50px;top:72.40px;font-size:19.71px;font-weight:700;color:#18212e;transform:scaleX(0.8108);-webkit-text-stroke:0.35px #18212e;">|18| The Power of Dremio in the Modern…</span>
<div style="position:absolute;left:0px;top:107.8px;width:383.5px;height:2px;background:#e6e8eb;"></div>
<svg style="position:absolute;left:18.5px;top:126.3px;" width="15" height="14" viewBox="0 0 15 14"><path d="M3 2.5 H1 V13.5 H10 V11.5" fill="none" stroke="#a36af0" stroke-width="1.2"/><rect x="3" y="0.7" width="10" height="10.8" rx="1" fill="none" stroke="#a36af0" stroke-width="1.2"/><path d="M5 3.5 H11 M5 5.7 H11 M5 7.9 H11" stroke="#a36af0" stroke-width="1"/></svg>
<span class="t" style="left:38.50px;top:127.30px;font-size:16.67px;font-weight:400;color:#6b717a;transform:scaleX(0.8759);-webkit-text-stroke:0.15px #6b717a;">Publication | 11.07.2025 | Buildings</span>
<span class="t" style="left:18.50px;top:149.30px;font-size:19.71px;font-weight:700;color:#18212e;transform:scaleX(0.8064);-webkit-text-stroke:0.35px #18212e;">Smart Building Recommendations with</span>
<span class="t" style="left:18.50px;top:180.70px;font-size:19.71px;font-weight:700;color:#18212e;transform:scaleX(0.8044);-webkit-text-stroke:0.35px #18212e;">LLMs: A Semantic Comparison Approach</span>
<div style="position:absolute;left:0px;top:216.1px;width:383.5px;height:2px;background:#e6e8eb;"></div>
<svg style="position:absolute;left:18.5px;top:234.6px;" width="15" height="14" viewBox="0 0 15 14"><path d="M1 2.5 H10 M2.5 5.5 H7 M2.5 8 H6 M1 2.5 V11.5 L3 10 H12.5 V7" fill="none" stroke="#a36af0" stroke-width="1.3"/><path d="M8 8 L13.5 2.5 L14.5 3.5 L9 9 L7.5 9.5 Z" fill="none" stroke="#a36af0" stroke-width="1.3"/></svg>
<span class="t" style="left:38.50px;top:235.60px;font-size:16.67px;font-weight:400;color:#6b717a;transform:scaleX(0.8675);-webkit-text-stroke:0.15px #6b717a;">Blog | 28.06.2025 | medium.com</span>
<span class="t" style="left:18.50px;top:257.60px;font-size:19.71px;font-weight:700;color:#18212e;transform:scaleX(0.8012);-webkit-text-stroke:0.35px #18212e;">How Open-Ended AI Reveals Reality’s</span>
<span class="t" style="left:18.50px;top:289.00px;font-size:19.71px;font-weight:700;color:#18212e;transform:scaleX(0.8136);-webkit-text-stroke:0.35px #18212e;">Categorical Structure</span>
<div style="position:absolute;left:0px;top:324.4px;width:383.5px;height:2px;background:#e6e8eb;"></div>
<svg style="position:absolute;left:18.5px;top:342.9px;" width="15" height="14" viewBox="0 0 15 14"><path d="M3 2.5 H1 V13.5 H10 V11.5" fill="none" stroke="#a36af0" stroke-width="1.2"/><rect x="3" y="0.7" width="10" height="10.8" rx="1" fill="none" stroke="#a36af0" stroke-width="1.2"/><path d="M5 3.5 H11 M5 5.7 H11 M5 7.9 H11" stroke="#a36af0" stroke-width="1"/></svg>
<span class="t" style="left:38.50px;top:343.90px;font-size:16.67px;font-weight:400;color:#6b717a;transform:scaleX(0.8668);-webkit-text-stroke:0.15px #6b717a;">Publication | 20.06.2025 | Dianzi Jishu Yingyong</span>
<span class="t" style="left:18.50px;top:365.90px;font-size:19.71px;font-weight:700;color:#18212e;transform:scaleX(0.7997);-webkit-text-stroke:0.35px #18212e;">Design of high frequency LLC resonant</span>
<span class="t" style="left:18.50px;top:397.30px;font-size:19.71px;font-weight:700;color:#18212e;transform:scaleX(0.8049);-webkit-text-stroke:0.35px #18212e;">circuit based on double loop control</span>
</div>
<div style="position:absolute;left:1985.5px;top:108px;width:19px;height:1260px;background:#f4f5f7;"></div>
<div style="position:absolute;left:1990.6px;top:109.6px;width:11px;height:732px;background:#c1c1c1;border-radius:5.5px;"></div>
<div style="position:absolute;left:620px;top:976.3px;width:1365.5px;height:144.5px;background:#e5eee9;border-radius:8px;"></div>
<svg style="position:absolute;left:629.7px;top:1030.2px;" width="36" height="36" viewBox="0 0 36 36"><defs><radialGradient id="tg"><stop offset="0" stop-color="#e6efe9"/><stop offset="0.5" stop-color="#e0efe4"/><stop offset="1" stop-color="#b3dfc3"/></radialGradient></defs><circle cx="18" cy="18" r="15.2" fill="none" stroke="#93d6c2" stroke-width="3" opacity=".9"/><circle cx="18" cy="18" r="13" fill="url(#tg)" stroke="#ffffff" stroke-width="1.2"/></svg>
<span class="t" style="left:671.60px;top:1036.00px;font-size:23.91px;font-weight:700;color:#18212e;transform:scaleX(0.7787);-webkit-text-stroke:0.35px #18212e;">Trending</span>
<div style="position:absolute;left:761.6px;top:986.9px;width:163.60000000000002px;height:34px;background:#f2f3f2;border:1.5px solid #5ec77e;border-radius:6px;box-sizing:border-box;overflow:hidden;"></div>
<div style="position:absolute;left:761.6px;top:986.9px;width:54.19999999999993px;height:34px;background:#5ec77e;border-radius:6px 0 0 6px;"></div>
<span class="t" style="left:776.70px;top:994.75px;font-size:17.03px;font-weight:700;color:#ffffff;transform:scaleX(0.7143);-webkit-text-stroke:0.35px #ffffff;">KEY</span>
<span class="t" style="left:825.00px;top:994.75px;font-size:17.03px;font-weight:700;color:#5ec77e;transform:scaleX(0.8302);-webkit-text-stroke:0.35px #5ec77e;">Energy (252)</span>
<div style="position:absolute;left:935.5px;top:986.9px;width:208.0999999999999px;height:34px;background:#f2f3f2;border:1.5px solid #5ec77e;border-radius:6px;box-sizing:border-box;overflow:hidden;"></div>
<div style="position:absolute;left:935.5px;top:986.9px;width:54.5px;height:34px;background:#5ec77e;border-radius:6px 0 0 6px;"></div>
<span class="t" style="left:950.75px;top:994.75px;font-size:17.03px;font-weight:700;color:#ffffff;transform:scaleX(0.7143);-webkit-text-stroke:0.35px #ffffff;">KEY</span>
<span class="t" style="left:999.20px;top:994.75px;font-size:17.03px;font-weight:700;color:#5ec77e;transform:scaleX(0.8318);-webkit-text-stroke:0.35px #5ec77e;">Results Show (211)</span>
<div style="position:absolute;left:1154.9px;top:986.9px;width:226.0999999999999px;height:34px;background:#f2f3f2;border:1.5px solid #5ec77e;border-radius:6px;box-sizing:border-box;overflow:hidden;"></div>
<div style="position:absolute;left:1154.9px;top:986.9px;width:54.19999999999982px;height:34px;background:#5ec77e;border-radius:6px 0 0 6px;"></div>
<span class="t" style="left:1170.00px;top:994.75px;font-size:17.03px;font-weight:700;color:#ffffff;transform:scaleX(0.7143);-webkit-text-stroke:0.35px #ffffff;">KEY</span>
<span class="t" style="left:1218.30px;top:994.75px;font-size:17.03px;font-weight:700;color:#5ec77e;transform:scaleX(0.8286);-webkit-text-stroke:0.35px #5ec77e;">Control Strategy (175)</span>
<div style="position:absolute;left:1392.4px;top:986.9px;width:165.79999999999995px;height:34px;background:#f2f3f2;border:1.5px solid #5ec77e;border-radius:6px;box-sizing:border-box;overflow:hidden;"></div>
<div style="position:absolute;left:1392.4px;top:986.9px;width:54.799999999999955px;height:34px;background:#5ec77e;border-radius:6px 0 0 6px;"></div>
<span class="t" style="left:1407.80px;top:994.75px;font-size:17.03px;font-weight:700;color:#ffffff;transform:scaleX(0.7143);-webkit-text-stroke:0.35px #ffffff;">KEY</span>
<span class="t" style="left:1456.40px;top:994.75px;font-size:17.03px;font-weight:700;color:#5ec77e;transform:scaleX(0.8459);-webkit-text-stroke:0.35px #5ec77e;">Project (136)</span>
<div style="position:absolute;left:1569.2px;top:986.9px;width:165.39999999999986px;height:34px;background:#f2f3f2;border:1.5px solid #5ec77e;border-radius:6px;box-sizing:border-box;overflow:hidden;"></div>
<div style="position:absolute;left:1569.2px;top:986.9px;width:54.799999999999955px;height:34px;background:#5ec77e;border-radius:6px 0 0 6px;"></div>
<span class="t" style="left:1584.60px;top:994.75px;font-size:17.03px;font-weight:700;color:#ffffff;transform:scaleX(0.7143);-webkit-text-stroke:0.35px #ffffff;">KEY</span>
<span class="t" style="left:1633.20px;top:994.75px;font-size:17.03px;font-weight:700;color:#5ec77e;transform:scaleX(0.8418);-webkit-text-stroke:0.35px #5ec77e;">Review (112)</span>
<div style="position:absolute;left:761.6px;top:1031.6px;width:249.69999999999993px;height:34px;background:#f2f3f2;border:1.5px solid #5ec77e;border-radius:6px;box-sizing:border-box;overflow:hidden;"></div>
<div style="position:absolute;left:761.6px;top:1031.6px;width:54.19999999999993px;height:34px;background:#5ec77e;border-radius:6px 0 0 6px;"></div>
<span class="t" style="left:776.70px;top:1039.45px;font-size:17.03px;font-weight:700;color:#ffffff;transform:scaleX(0.7143);-webkit-text-stroke:0.35px #ffffff;">KEY</span>
<span class="t" style="left:825.00px;top:1039.45px;font-size:17.03px;font-weight:700;color:#5ec77e;transform:scaleX(0.8485);-webkit-text-stroke:0.35px #5ec77e;">Artificial Intelligence (94)</span>
<div style="position:absolute;left:1022.3px;top:1031.6px;width:147.9000000000001px;height:34px;background:#f2f3f2;border:1.5px solid #e09c3b;border-radius:6px;box-sizing:border-box;overflow:hidden;"></div>
<div style="position:absolute;left:1022.3px;top:1031.6px;width:55.700000000000045px;height:34px;background:#e09c3b;border-radius:6px 0 0 6px;"></div>
<span class="t" style="left:1037.30px;top:1039.45px;font-size:17.03px;font-weight:700;color:#ffffff;transform:scaleX(0.7433);-webkit-text-stroke:0.35px #ffffff;">LOC</span>
<span class="t" style="left:1087.20px;top:1039.45px;font-size:17.03px;font-weight:700;color:#e09c3b;transform:scaleX(0.8217);-webkit-text-stroke:0.35px #e09c3b;">China (16)</span>
<div style="position:absolute;left:1181.2px;top:1031.6px;width:119.89999999999986px;height:34px;background:#f2f3f2;border:1.5px solid #e09c3b;border-radius:6px;box-sizing:border-box;overflow:hidden;"></div>
<div style="position:absolute;left:1181.2px;top:1031.6px;width:55.700000000000045px;height:34px;background:#e09c3b;border-radius:6px 0 0 6px;"></div>
<span class="t" style="left:1196.20px;top:1039.45px;font-size:17.03px;font-weight:700;color:#ffffff;transform:scaleX(0.7433);-webkit-text-stroke:0.35px #ffffff;">LOC</span>
<span class="t" style="left:1246.10px;top:1039.45px;font-size:17.03px;font-weight:700;color:#e09c3b;transform:scaleX(0.8053);-webkit-text-stroke:0.35px #e09c3b;">US (9)</span>
<div style="position:absolute;left:1312px;top:1031.6px;width:192.5px;height:34px;background:#f2f3f2;border:1.5px solid #e09c3b;border-radius:6px;box-sizing:border-box;overflow:hidden;"></div>
<div style="position:absolute;left:1312px;top:1031.6px;width:56px;height:34px;background:#e09c3b;border-radius:6px 0 0 6px;"></div>
<span class="t" style="left:1327.15px;top:1039.45px;font-size:17.03px;font-weight:700;color:#ffffff;transform:scaleX(0.7433);-webkit-text-stroke:0.35px #ffffff;">LOC</span>
<span class="t" style="left:1377.20px;top:1039.45px;font-size:17.03px;font-weight:700;color:#e09c3b;transform:scaleX(0.8334);-webkit-text-stroke:0.35px #e09c3b;">United States (8)</span>
<div style="position:absolute;left:1515.5px;top:1031.6px;width:149.70000000000005px;height:34px;background:#f2f3f2;border:1.5px solid #8c3bf0;border-radius:6px;box-sizing:border-box;overflow:hidden;"></div>
<div style="position:absolute;left:1515.5px;top:1031.6px;width:56.5px;height:34px;background:#8c3bf0;border-radius:6px 0 0 6px;"></div>
<span class="t" style="left:1530.20px;top:1039.45px;font-size:17.03px;font-weight:700;color:#ffffff;transform:scaleX(0.7249);-webkit-text-stroke:0.35px #ffffff;">ORG</span>
<span class="t" style="left:1581.20px;top:1039.45px;font-size:17.03px;font-weight:700;color:#8c3bf0;transform:scaleX(0.8153);-webkit-text-stroke:0.35px #8c3bf0;">Google (7)</span>
<div style="position:absolute;left:1676.2px;top:1031.6px;width:168.0px;height:34px;background:#f2f3f2;border:1.5px solid #8c3bf0;border-radius:6px;box-sizing:border-box;overflow:hidden;"></div>
<div style="position:absolute;left:1676.2px;top:1031.6px;width:57.700000000000045px;height:34px;background:#8c3bf0;border-radius:6px 0 0 6px;"></div>
<span class="t" style="left:1691.50px;top:1039.45px;font-size:17.03px;font-weight:700;color:#ffffff;transform:scaleX(0.7249);-webkit-text-stroke:0.35px #ffffff;">ORG</span>
<span class="t" style="left:1743.10px;top:1039.45px;font-size:17.03px;font-weight:700;color:#8c3bf0;transform:scaleX(0.8393);-webkit-text-stroke:0.35px #8c3bf0;">Microsoft (6)</span>
<div style="position:absolute;left:761.6px;top:1076.3px;width:152.14999999999998px;height:34px;background:#f2f3f2;border:1.5px solid #8c3bf0;border-radius:6px;box-sizing:border-box;overflow:hidden;"></div>
<div style="position:absolute;left:761.6px;top:1076.3px;width:57.0px;height:34px;background:#8c3bf0;border-radius:6px 0 0 6px;"></div>
<span class="t" style="left:776.55px;top:1084.15px;font-size:17.03px;font-weight:700;color:#ffffff;transform:scaleX(0.7249);-webkit-text-stroke:0.35px #ffffff;">ORG</span>
<span class="t" style="left:827.80px;top:1084.15px;font-size:17.03px;font-weight:700;color:#8c3bf0;transform:scaleX(0.8201);-webkit-text-stroke:0.35px #8c3bf0;">OpenAI (6)</span>
<div style="position:absolute;left:925.2px;top:1076.3px;width:144.20000000000005px;height:34px;background:#f2f3f2;border:1.5px solid #2f67d8;border-radius:6px;box-sizing:border-box;overflow:hidden;"></div>
<div style="position:absolute;left:925.2px;top:1076.3px;width:54.69999999999993px;height:34px;background:#2f67d8;border-radius:6px 0 0 6px;"></div>
<span class="t" style="left:939.85px;top:1084.15px;font-size:17.03px;font-weight:700;color:#ffffff;transform:scaleX(0.7543);-webkit-text-stroke:0.35px #ffffff;">PER</span>
<span class="t" style="left:989.10px;top:1084.15px;font-size:17.03px;font-weight:700;color:#2f67d8;transform:scaleX(0.8371);-webkit-text-stroke:0.35px #2f67d8;">Trump (3)</span>
<div style="position:absolute;left:1080.7px;top:1076.3px;width:215.0px;height:34px;background:#f2f3f2;border:1.5px solid #2f67d8;border-radius:6px;box-sizing:border-box;overflow:hidden;"></div>
<div style="position:absolute;left:1080.7px;top:1076.3px;width:54.299999999999955px;height:34px;background:#2f67d8;border-radius:6px 0 0 6px;"></div>
<span class="t" style="left:1095.15px;top:1084.15px;font-size:17.03px;font-weight:700;color:#ffffff;transform:scaleX(0.7543);-webkit-text-stroke:0.35px #ffffff;">PER</span>
<span class="t" style="left:1144.20px;top:1084.15px;font-size:17.03px;font-weight:700;color:#2f67d8;transform:scaleX(0.8367);-webkit-text-stroke:0.35px #2f67d8;">Mark Zuckerberg (3)</span>
<div style="position:absolute;left:1306.2px;top:1076.3px;width:182.5999999999999px;height:34px;background:#f2f3f2;border:1.5px solid #2f67d8;border-radius:6px;box-sizing:border-box;overflow:hidden;"></div>
<div style="position:absolute;left:1306.2px;top:1076.3px;width:55.799999999999955px;height:34px;background:#2f67d8;border-radius:6px 0 0 6px;"></div>
<span class="t" style="left:1321.40px;top:1084.15px;font-size:17.03px;font-weight:700;color:#ffffff;transform:scaleX(0.7543);-webkit-text-stroke:0.35px #ffffff;">PER</span>
<span class="t" style="left:1371.20px;top:1084.15px;font-size:17.03px;font-weight:700;color:#2f67d8;transform:scaleX(0.8293);-webkit-text-stroke:0.35px #2f67d8;">Sam Altman (2)</span>
<span class="t" style="left:1873.40px;top:1084.20px;font-size:21.16px;font-weight:400;color:#27407f;transform:scaleX(0.7767);-webkit-text-stroke:0.15px #27407f;">Show less</span>
<svg style="position:absolute;left:1956.5px;top:1087.5px;" width="18" height="13" viewBox="0 0 18 13"><path d="M1.5 11 L9 3 L16.5 11" fill="none" stroke="#27407f" stroke-width="2.4"/></svg>
<div style="position:absolute;left:620px;top:1131px;width:1365px;height:237.5px;overflow:hidden;">
<div style="position:absolute;left:0px;top:0px;width:477.5px;height:300px;background:#ffffff;border:2px solid #dcdee2;border-radius:8px;box-sizing:border-box;"></div>
<span class="t" style="left:15.50px;top:19.30px;font-size:19.42px;font-weight:700;color:#18212e;transform:scaleX(0.8366);-webkit-text-stroke:0.35px #18212e;">Filter</span>
<div style="position:absolute;left:1px;top:50px;width:68px;height:6.3px;background:#58c1d9;"></div>
<div style="position:absolute;left:1px;top:57px;width:475.5px;height:1.5px;background:#dcdfe3;"></div>
<div style="position:absolute;left:456px;top:58.5px;width:20.4px;height:240px;background:#f4f5f7;"></div>
<div style="position:absolute;left:462px;top:62px;width:10.6px;height:240px;background:#c1c1c1;border-radius:5px;"></div>
<span class="t" style="left:12.40px;top:102.40px;font-size:18.84px;font-weight:700;color:#18212e;transform:scaleX(0.8222);-webkit-text-stroke:0.35px #18212e;">Sources</span>
<div style="position:absolute;left:12.399999999999977px;top:133.5px;width:82.20000000000005px;height:34px;border:2px solid #a0a5ac;border-radius:6px;box-sizing:border-box;"></div>
<svg style="position:absolute;left:28.399999999999977px;top:143.5px;" width="15" height="15" viewBox="0 0 15 15"><path d="M1 2.5 H10 M2.5 5.5 H7 M2.5 8 H6 M1 2.5 V11.5 L3 10 H12.5 V7" fill="none" stroke="#8a9099" stroke-width="1.3"/><path d="M8 8 L13.5 2.5 L14.5 3.5 L9 9 L7.5 9.5 Z" fill="none" stroke="#8a9099" stroke-width="1.3"/></svg>
<span class="t" style="left:51.40px;top:141.90px;font-size:17.25px;font-weight:400;color:#6b717a;transform:scaleX(0.8080);-webkit-text-stroke:0.15px #6b717a;">Blog</span>
<div style="position:absolute;left:106px;top:133.5px;width:94.89999999999998px;height:34px;border:2px solid #a0a5ac;border-radius:6px;box-sizing:border-box;"></div>
<svg style="position:absolute;left:121.5px;top:143.5px;" width="15" height="15" viewBox="0 0 15 15"><path d="M1 1 H10 V7 H4 L2 9 V7 H1 Z" fill="none" stroke="#8a9099" stroke-width="1.2"/><path d="M5 8.5 V9.5 H11 L13 11.5 V9.5 H14.5 V4 H11.5" fill="none" stroke="#8a9099" stroke-width="1.2"/><path d="M3 3 H8 M3 5 H7" stroke="#8a9099" stroke-width="1"/></svg>
<span class="t" style="left:144.50px;top:141.90px;font-size:17.25px;font-weight:400;color:#6b717a;transform:scaleX(0.8166);-webkit-text-stroke:0.15px #6b717a;">Forum</span>
<div style="position:absolute;left:211.60000000000002px;top:133.5px;width:89.60000000000002px;height:34px;border:2px solid #a0a5ac;border-radius:6px;box-sizing:border-box;"></div>
<svg style="position:absolute;left:227.39999999999998px;top:143.5px;" width="15" height="15" viewBox="0 0 15 15"><path d="M3 2 H14.5 V12.5 H2 A1.5 1.5 0 0 1 0.8 11 V5 H3 V11" fill="none" stroke="#8a9099" stroke-width="1.2"/><rect x="5" y="4" width="7.5" height="3" fill="none" stroke="#8a9099" stroke-width="1"/><path d="M5 9 H12.5 M5 10.8 H12.5" stroke="#8a9099" stroke-width="1"/></svg>
<span class="t" style="left:250.40px;top:141.90px;font-size:17.25px;font-weight:400;color:#6b717a;transform:scaleX(0.8252);-webkit-text-stroke:0.15px #6b717a;">News</span>
<div style="position:absolute;left:311.9px;top:133.5px;width:127.19999999999993px;height:34px;border:2px solid #a0a5ac;border-radius:6px;box-sizing:border-box;"></div>
<svg style="position:absolute;left:327.70000000000005px;top:143.5px;" width="15" height="15" viewBox="0 0 15 15"><path d="M3 2.5 H1 V13.5 H10 V11.5" fill="none" stroke="#8a9099" stroke-width="1.2"/><rect x="3" y="0.7" width="10" height="10.8" rx="1" fill="none" stroke="#8a9099" stroke-width="1.2"/><path d="M5 3.5 H11 M5 5.7 H11 M5 7.9 H11" stroke="#8a9099" stroke-width="1"/></svg>
<span class="t" style="left:350.70px;top:141.90px;font-size:17.25px;font-weight:400;color:#6b717a;transform:scaleX(0.8674);-webkit-text-stroke:0.15px #6b717a;">Publication</span>
<div style="position:absolute;left:12.399999999999977px;top:178.20000000000005px;width:114.39999999999998px;height:34px;border:2px solid #a0a5ac;border-radius:6px;box-sizing:border-box;"></div>
<svg style="position:absolute;left:26.100000000000023px;top:188.20000000000005px;" width="17" height="15" viewBox="0 0 17 15"><path d="M3.5 1 H16 V14 H2.5 A1.8 1.8 0 0 1 0.8 12.2 V4.5 H3.5 V12.5" fill="none" stroke="#8a9099" stroke-width="1.4"/><rect x="6" y="3.5" width="4" height="4" fill="#8a9099"/><path d="M11.5 4 H14 M11.5 6.5 H14 M6 9.5 H14 M6 11.8 H14" stroke="#8a9099" stroke-width="1.2"/></svg>
<span class="t" style="left:51.10px;top:186.60px;font-size:17.25px;font-weight:400;color:#6b717a;transform:scaleX(0.8214);-webkit-text-stroke:0.15px #6b717a;">Web feed</span>
<div style="position:absolute;left:12px;top:233.5px;width:434px;height:1.5px;background:#dcdfe3;"></div>
<div style="position:absolute;left:498.5px;top:1px;width:866px;height:300px;background:#ffffff;border:2px solid #dcdee2;border-radius:8px;box-sizing:border-box;"></div>
<span class="t" style="left:510.00px;top:25.50px;font-size:24.78px;font-weight:700;color:#18212e;transform:scaleX(0.7756);-webkit-text-stroke:0.35px #18212e;">2,795 Results</span>
<div style="position:absolute;left:510px;top:63px;width:843.6px;height:36.2px;border:1.5px solid #d8dbdf;border-radius:4px;box-sizing:border-box;"></div>
<svg style="position:absolute;left:522.5px;top:71px;" width="23" height="23" viewBox="0 0 23 23"><circle cx="9" cy="9" r="7.2" fill="none" stroke="#7c8088" stroke-width="2.2"/><path d="M14.2 14.2 L21 21" stroke="#7c8088" stroke-width="2.4" stroke-linecap="round"/></svg>
<span class="t" style="left:559.60px;top:72.60px;font-size:15.94px;font-weight:400;color:#5f6670;transform:scaleX(0.8792);-webkit-text-stroke:0.15px #5f6670;">Search</span>
<div style="position:absolute;left:499.5px;top:119.5px;width:864px;height:1.5px;background:#e3e5e8;"></div>
<div style="position:absolute;left:1343.5px;top:121px;width:21px;height:200px;background:#f7f8f9;"></div>
<div style="position:absolute;left:1349px;top:122px;width:10px;height:14px;background:#c1c1c1;border-radius:5px;"></div>
<svg style="position:absolute;left:518px;top:140px;" width="15" height="13" viewBox="0 0 15 13"><path d="M3 2 H14.5 V12.5 H2 A1.5 1.5 0 0 1 0.8 11 V5 H3 V11" fill="none" stroke="#8a9099" stroke-width="1.2"/><rect x="5" y="4" width="7.5" height="3" fill="none" stroke="#8a9099" stroke-width="1"/><path d="M5 9 H12.5 M5 10.8 H12.5" stroke="#8a9099" stroke-width="1"/></svg>
<span class="t" style="left:537.00px;top:139.50px;font-size:16.67px;font-weight:400;color:#5f6670;transform:scaleX(0.8660);-webkit-text-stroke:0.15px #5f6670;">News | 26.06.2025 | prnewswire.com</span>
<span class="t" style="left:517.00px;top:161.80px;font-size:19.71px;font-weight:700;color:#18212e;transform:scaleX(0.7897);-webkit-text-stroke:0.35px #18212e;">CADILLAC FAIRVIEW IMPLEMENTS SMART BUILDING OPERATING SYSTEM KODE OS TO DRIVE</span>
<span class="t" style="left:517.00px;top:192.80px;font-size:19.71px;font-weight:700;color:#18212e;transform:scaleX(0.7990);-webkit-text-stroke:0.35px #18212e;">PREDICTIVE, DATA-DRIVEN BUILDING MANAGEMENT</span>
<span class="t" style="left:517.00px;top:224.30px;font-size:17.10px;font-weight:400;color:#2e3540;transform:scaleX(0.9775);-webkit-text-stroke:0.15px #2e3540;">...experiences we provide to our tenants." About KODE Labs KODE Labs specializes in transforming real es-</span>
</div>
</body></html>
